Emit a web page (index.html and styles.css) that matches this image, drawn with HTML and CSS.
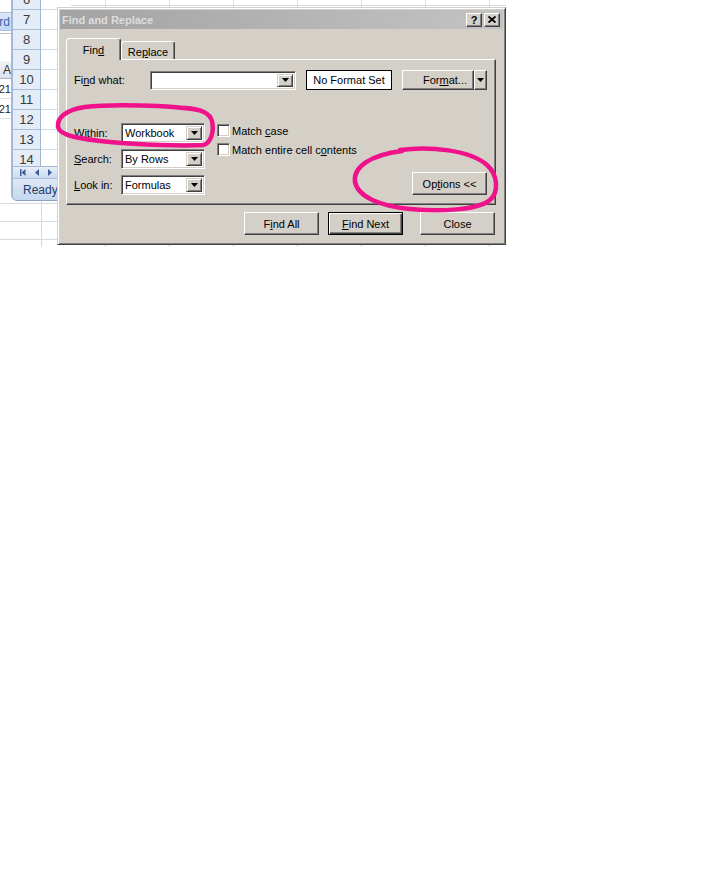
FILE: index.html
```html
<!DOCTYPE html>
<html lang="en">
<head>
    <meta charset="UTF-8">
    <meta name="viewport" content="width=device-width, initial-scale=1.0">
    <title>Find and Replace</title>
    <link rel="stylesheet" href="styles.css">
</head>
<body>
<div class="screen">
    <div class="sheet"></div>

    <div class="edge-win">
        <div class="ribbon-btn"><span>rd</span></div>
        <div class="ribbon-rule"></div>
        <div class="col-head">A</div>
        <div class="cell"><span>21</span></div>
        <div class="cell"><span>21</span></div>
    </div>

    <div class="book">
        <div class="book-grid">
            <div class="rows">
                <div class="row-num">6</div>
                <div class="row-num">7</div>
                <div class="row-num">8</div>
                <div class="row-num">9</div>
                <div class="row-num">10</div>
                <div class="row-num">11</div>
                <div class="row-num">12</div>
                <div class="row-num">13</div>
                <div class="row-num">14</div>
            </div>
            <div class="cells"></div>
        </div>
        <div class="tabs-bar">
            <svg width="34" height="9" viewBox="0 0 34 9">
                <rect x="0" y="1" width="1.5" height="7" fill="#3d5f99"/>
                <polygon points="1.5,4.5 5.5,1 5.5,8" fill="#3d5f99"/>
                <polygon points="15,4.5 19,1 19,8" fill="#3d5f99"/>
                <polygon points="32,4.5 28,1 28,8" fill="#3d5f99"/>
            </svg>
        </div>
        <div class="status">Ready</div>
    </div>

    <div class="dialog">
        <div class="titlebar">
            <span class="title">Find and Replace</span>
            <span class="tb-btn">?</span>
            <span class="tb-btn">
                <svg width="8" height="7" viewBox="0 0 8 7">
                    <path d="M0.5 0.5 L7.5 6.5 M7.5 0.5 L0.5 6.5" stroke="#000" stroke-width="1.8"/>
                </svg>
            </span>
        </div>
        <div class="dlg-body">
            <div class="tabs">
                <div class="tab active"><span>Fin<u>d</u></span></div>
                <div class="tab"><span>Re<u>p</u>lace</span></div>
            </div>
            <div class="panel">
                <div class="find-row">
                    <span class="lbl lbl-find">Fi<u>n</u>d what:</span>
                    <div class="combo combo-wide">
                        <span class="combo-val"></span>
                        <span class="drop"><svg width="7" height="4" viewBox="0 0 7 4"><polygon points="0,0 7,0 3.5,4"/></svg></span>
                    </div>
                    <div class="format-box">No Format Set</div>
                    <div class="split">
                        <span class="btn split-main"><span>For<u>m</u>at...</span></span>
                        <span class="btn split-arrow"><svg width="7" height="4" viewBox="0 0 7 4"><polygon points="0,0 7,0 3.5,4"/></svg></span>
                    </div>
                </div>
                <div class="lower">
                    <div class="fields">
                        <div class="field">
                            <span class="lbl">Wit<u>h</u>in:</span>
                            <div class="combo">
                                <span class="combo-val">Workbook</span>
                                <span class="drop"><svg width="7" height="4" viewBox="0 0 7 4"><polygon points="0,0 7,0 3.5,4"/></svg></span>
                            </div>
                        </div>
                        <div class="field">
                            <span class="lbl"><u>S</u>earch:</span>
                            <div class="combo">
                                <span class="combo-val">By Rows</span>
                                <span class="drop"><svg width="7" height="4" viewBox="0 0 7 4"><polygon points="0,0 7,0 3.5,4"/></svg></span>
                            </div>
                        </div>
                        <div class="field">
                            <span class="lbl"><u>L</u>ook in:</span>
                            <div class="combo">
                                <span class="combo-val">Formulas</span>
                                <span class="drop"><svg width="7" height="4" viewBox="0 0 7 4"><polygon points="0,0 7,0 3.5,4"/></svg></span>
                            </div>
                        </div>
                    </div>
                    <div class="checks">
                        <div class="check"><span class="box"></span><span>Match <u>c</u>ase</span></div>
                        <div class="check"><span class="box"></span><span>Match entire cell c<u>o</u>ntents</span></div>
                    </div>
                    <button class="btn options"><span>Op<u>t</u>ions &lt;&lt;</span></button>
                </div>
            </div>
            <div class="actions">
                <button class="btn"><span>F<u>i</u>nd All</span></button>
                <button class="btn default"><span><u>F</u>ind Next</span></button>
                <button class="btn close">Close</button>
            </div>
        </div>
    </div>

    <svg class="marks" width="701" height="260" viewBox="0 0 701 260">
        <path d="M198 110 C170 105, 110 104, 85 107 C65 110, 57 118, 58 127 C60 136, 80 139, 110 142 C140 145, 185 146, 203 145 C212 143, 214 130, 212 121 C210 113, 200 109, 185 108"/>
        <path d="M400 150 C430 146, 470 150, 487 165 C498 175, 499 192, 490 200 C478 210, 440 212, 410 209 C380 206, 358 197, 355 182 C353 167, 370 155, 402 151"/>
    </svg>
</div>
</body>
</html>
```

FILE: styles.css
```css
* {
    box-sizing: border-box;
}
body {
    margin: 0;
    background: #fff;
    font-family: "Liberation Sans", Arial, sans-serif;
}
.screen {
    position: relative;
    width: 701px;
    height: 871px;
    overflow: hidden;
    background: #fff;
}

/* spreadsheet behind the dialog */
.sheet {
    position: absolute;
    left: 0;
    top: 0;
    width: 506px;
    height: 247px;
    background-color: #fff;
    background-image:
        linear-gradient(to right, #d5dae2 1px, transparent 1px),
        linear-gradient(to bottom, #d5dae2 1px, transparent 1px);
    background-size: 64px 100%, 100% 18px;
    background-position: 41px 0, 0 5px;
}
.edge-win {
    position: absolute;
    left: 0;
    top: 0;
    width: 11px;
    height: 200px;
    background: #fff;
    display: flex;
    flex-direction: column;
    overflow: hidden;
}
.ribbon-btn {
    margin-top: 12px;
    height: 19px;
    display: flex;
    justify-content: flex-end;
    align-items: center;
    padding-right: 1px;
    background: linear-gradient(#dbe8f8, #bfd5f1);
    border-top: 1px solid #a9c1df;
    border-bottom: 1px solid #a9c1df;
    color: #3b64a8;
    font-size: 12px;
    white-space: nowrap;
}
.ribbon-rule {
    margin-top: 2px;
    height: 1px;
    background: #bcc3cc;
}
.col-head {
    margin-top: 27px;
    height: 18px;
    padding-left: 3px;
    display: flex;
    align-items: center;
    background: linear-gradient(#f1f4f8, #dde3ec);
    border-bottom: 1px solid #a9b6c8;
    color: #333;
    font-size: 12px;
}
.cell {
    height: 20px;
    display: flex;
    justify-content: flex-end;
    align-items: center;
    border-bottom: 1px solid #dde2ea;
    font-size: 11px;
    color: #222;
    white-space: nowrap;
}

.book {
    position: absolute;
    left: 11px;
    top: 0;
    width: 60px;
    height: 201px;
    display: flex;
    flex-direction: column;
    background: #fff;
    border-left: 2px solid #a3b9d7;
    border-bottom: 1px solid #8ea6c6;
    border-bottom-left-radius: 6px;
    overflow: hidden;
}
.book-grid {
    height: 166px;
    flex: none;
    display: flex;
    overflow: hidden;
}
.rows {
    width: 28px;
    margin-top: -10px;
    background: #e4ecf7;
    border-right: 1px solid #9eb6ce;
}
.row-num {
    height: 20px;
    display: flex;
    align-items: center;
    justify-content: center;
    border-bottom: 1px solid #a9bfd8;
    color: #3a3a3a;
    font-size: 13px;
}
.cells {
    flex: 1;
    background-image: linear-gradient(to bottom, #d3dae5 1px, transparent 1px);
    background-size: 100% 20px;
    background-position: 0 9px;
}
.tabs-bar {
    height: 12px;
    flex: none;
    display: flex;
    align-items: center;
    padding-left: 7px;
    background: linear-gradient(#e8eff9, #cbdaee);
    border-top: 1px solid #9fb5d3;
}
.status {
    height: 22px;
    flex: none;
    display: flex;
    align-items: center;
    padding-left: 10px;
    background: linear-gradient(#dfe9f6, #c5d7ef);
    border-top: 1px solid #aac0dc;
    color: #1f3d6b;
    font-size: 12px;
}

/* the dialog */
.dialog {
    position: absolute;
    left: 57px;
    top: 7px;
    width: 449px;
    height: 238px;
    padding: 2px;
    background: #d4d0c8;
    border: 1px solid;
    border-color: #d4d0c8 #404040 #404040 #d4d0c8;
    box-shadow: inset 1px 1px #fff, inset -1px -1px #808080;
    font-size: 11px;
    color: #000;
}
.titlebar {
    height: 19px;
    display: flex;
    align-items: center;
    padding: 0 3px 0 2px;
    background: linear-gradient(to right, #a3a3a3, #c3c3c3);
}
.title {
    flex: 1;
    font-weight: bold;
    color: #dedede;
}
.tb-btn {
    width: 16px;
    height: 14px;
    display: flex;
    align-items: center;
    justify-content: center;
    background: #d4d0c8;
    border: 1px solid;
    border-color: #fff #404040 #404040 #fff;
    box-shadow: inset -1px -1px #808080;
    font-weight: bold;
    font-size: 11px;
}
.tb-btn + .tb-btn {
    margin-left: 2px;
}
.dlg-body {
    padding: 9px 7px 0 6px;
}
.tabs {
    position: relative;
    z-index: 1;
    display: flex;
    align-items: flex-end;
    height: 22px;
    margin-bottom: -1px;
}
.tab {
    width: 54px;
    height: 18px;
    margin-bottom: 1px;
    padding-top: 2px;
    display: flex;
    align-items: center;
    justify-content: center;
    background: #d4d0c8;
    border: 1px solid;
    border-bottom: 0;
    border-color: #fff #404040 transparent #fff;
    box-shadow: inset -1px 0 #808080;
    border-radius: 3px 3px 0 0;
}
.tab.active {
    width: 55px;
    height: 22px;
    margin-bottom: 0;
    padding-top: 0;
}
.panel {
    padding: 10px 8px 9px 7px;
    border: 1px solid;
    border-color: #fff #404040 #404040 #fff;
    box-shadow: inset -1px -1px #808080;
}
.find-row {
    display: flex;
    align-items: center;
    height: 20px;
}
.lbl-find {
    width: 76px;
}
.combo {
    height: 20px;
    display: flex;
    align-items: center;
    padding: 2px;
    background: #fff;
    border: 1px solid;
    border-color: #808080 #fff #fff #808080;
    box-shadow: inset 1px 1px #404040, inset -1px -1px #d4d0c8;
}
.combo-wide {
    width: 146px;
    height: 19px;
}
.combo-val {
    flex: 1;
    padding-left: 1px;
    white-space: nowrap;
}
.drop {
    width: 16px;
    height: 100%;
    flex: none;
    display: flex;
    align-items: center;
    justify-content: center;
    background: #d4d0c8;
    border: 1px solid;
    border-color: #d4d0c8 #404040 #404040 #d4d0c8;
    box-shadow: inset 1px 1px #fff, inset -1px -1px #808080;
}
.format-box {
    width: 86px;
    height: 20px;
    margin-left: 10px;
    display: flex;
    align-items: center;
    justify-content: center;
    background: #fff;
    border: 1px solid #000;
}
.split {
    display: flex;
    height: 20px;
    margin-left: 10px;
}
.btn {
    font: inherit;
    color: #000;
    padding: 0;
    display: flex;
    align-items: center;
    justify-content: center;
    background: #d4d0c8;
    border: 1px solid;
    border-color: #fff #404040 #404040 #fff;
    box-shadow: inset -1px -1px #808080;
}
.split-main {
    width: 72px;
    justify-content: flex-end;
    padding-right: 6px;
}
.split-arrow {
    width: 13px;
}
.lower {
    display: flex;
    margin-top: 33px;
}
.fields {
    display: flex;
    flex-direction: column;
    gap: 6px;
}
.field {
    display: flex;
    align-items: center;
    height: 20px;
}
.field .lbl {
    width: 47px;
}
.field .combo {
    width: 84px;
}
.checks {
    margin-left: 12px;
    margin-top: 1px;
    display: flex;
    flex-direction: column;
    gap: 6px;
}
.check {
    display: flex;
    align-items: center;
    height: 13px;
    white-space: nowrap;
}
.box {
    width: 13px;
    height: 13px;
    margin-right: 2px;
    background: #fff;
    border: 1px solid;
    border-color: #808080 #fff #fff #808080;
    box-shadow: inset 1px 1px #404040, inset -1px -1px #d4d0c8;
}
.options {
    margin-left: auto;
    align-self: flex-end;
    width: 75px;
    height: 23px;
}
.actions {
    display: flex;
    justify-content: flex-end;
    margin-top: 7px;
    padding-right: 1px;
}
.actions .btn {
    width: 75px;
    height: 23px;
}
.actions .btn + .btn {
    margin-left: 9px;
}
.actions .btn.close {
    margin-left: 17px;
}
.btn.default {
    border-color: #000;
    box-shadow: inset 1px 1px #fff, inset -1px -1px #404040, inset -2px -2px #808080;
}
u {
    text-decoration: underline;
    text-decoration-thickness: 1px;
    text-underline-offset: 1px;
}

/* pen marks drawn over the screenshot */
.marks {
    position: absolute;
    left: 0;
    top: 0;
    pointer-events: none;
}
.marks path {
    fill: none;
    stroke: #f0128a;
    stroke-width: 4.5;
    stroke-linecap: round;
    stroke-linejoin: round;
}
```
